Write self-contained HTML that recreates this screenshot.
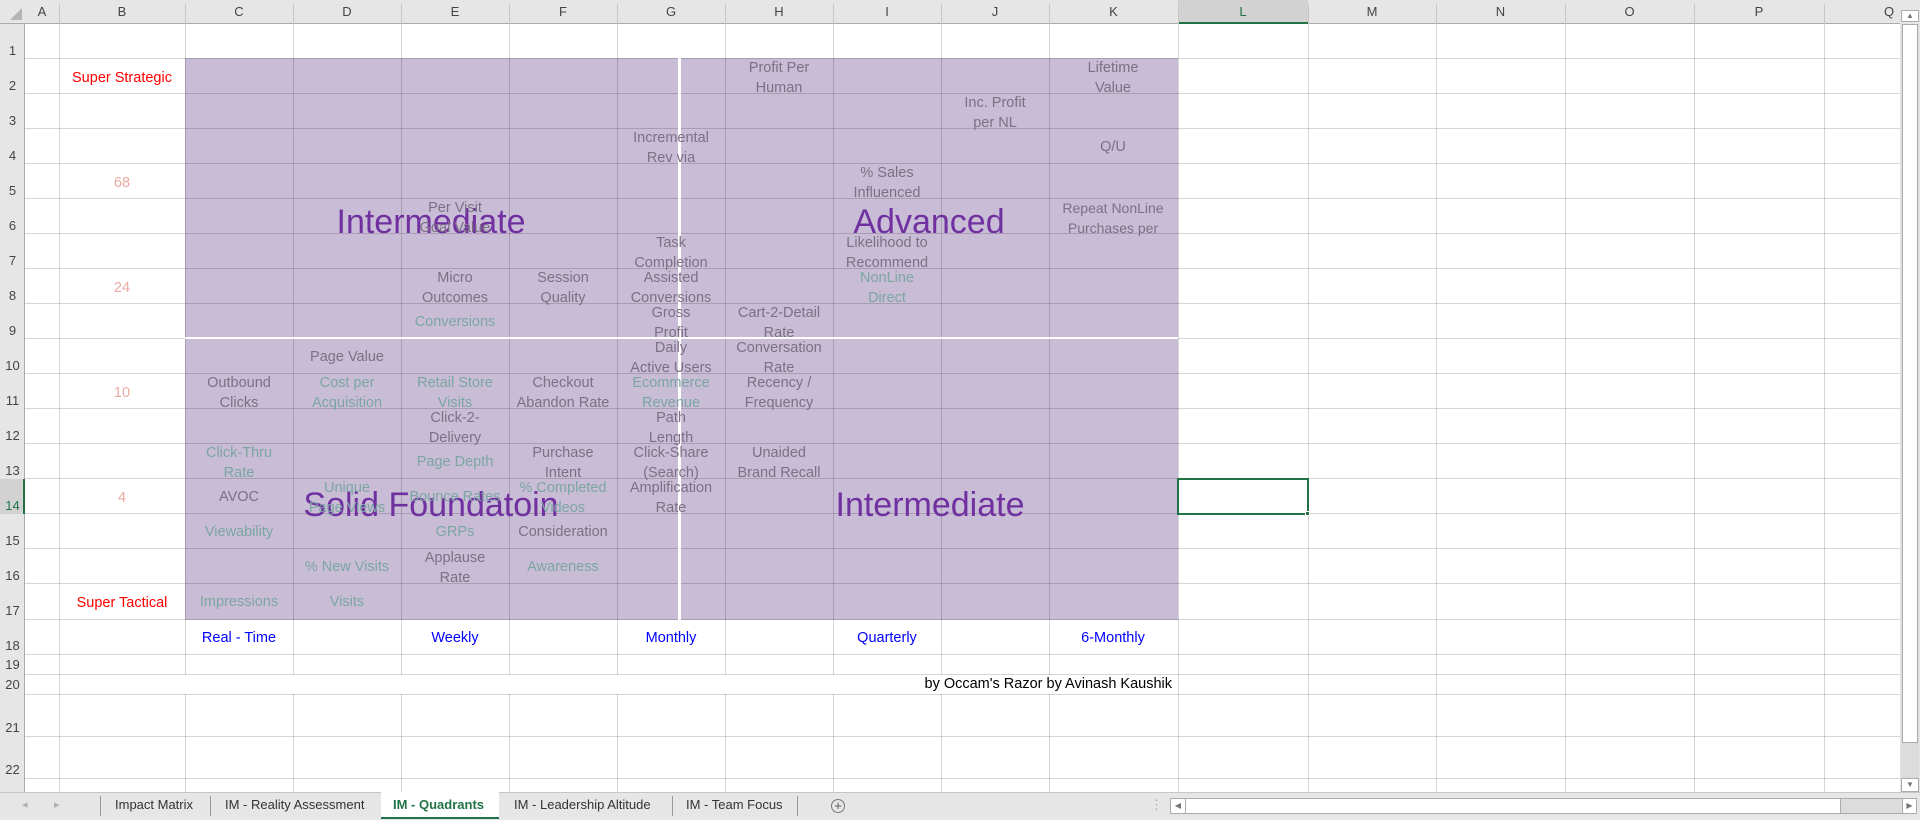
<!DOCTYPE html>
<html><head><meta charset="utf-8"><style>
*{margin:0;padding:0;box-sizing:border-box}
body{width:1920px;height:820px;overflow:hidden;background:#fff;position:relative;font-family:"Liberation Sans",Arial,sans-serif}
.a{position:absolute}
.hl{position:absolute;left:25px;width:1875px;height:1px;background:rgba(0,0,0,0.16)}
.vl{position:absolute;top:24px;width:1px;height:768px;background:rgba(0,0,0,0.16)}
.ch{position:absolute;top:0;height:24px;line-height:24px;text-align:center;font-size:13px;color:#444}
.rh{position:absolute;left:0;width:25px;text-align:center;font-size:13px;color:#444}
.t{position:absolute;width:220px;text-align:center;font-size:14.5px;line-height:18px;height:18px;white-space:nowrap;color:#7b7186}
.g{color:#7ba6a2}
.r{color:#ff0000}
.p{color:#e9aaa2}
.b{color:#0000ff}
.big{position:absolute;font-size:34px;color:#7030a0;white-space:nowrap;line-height:40px;width:400px;text-align:center}
.tab{position:absolute;top:792px;height:28px;line-height:26px;font-size:13px;color:#333;white-space:nowrap}
</style></head><body>
<div class="a" style="left:0;top:0;width:1920px;height:24px;background:#e6e6e6;border-bottom:1px solid #ababab"></div>
<div class="a" style="left:0;top:24px;width:25px;height:768px;background:#e6e6e6;border-right:1px solid #ababab"></div>
<div class="a" style="left:1178px;top:0;width:130px;height:24px;background:#d2d2d2;border-bottom:2px solid #217346"></div>
<div class="a" style="left:0;top:479px;width:25px;height:35px;background:#d2d2d2;border-right:2px solid #217346"></div>
<div class="a" style="left:10px;top:8px;width:0;height:0;border-left:12px solid transparent;border-bottom:12px solid #b5b5b5"></div>
<div class="ch" style="left:25px;width:34px">A</div>
<div class="ch" style="left:59px;width:126px">B</div>
<div class="ch" style="left:185px;width:108px">C</div>
<div class="ch" style="left:293px;width:108px">D</div>
<div class="ch" style="left:401px;width:108px">E</div>
<div class="ch" style="left:509px;width:108px">F</div>
<div class="ch" style="left:617px;width:108px">G</div>
<div class="ch" style="left:725px;width:108px">H</div>
<div class="ch" style="left:833px;width:108px">I</div>
<div class="ch" style="left:941px;width:108px">J</div>
<div class="ch" style="left:1049px;width:129px">K</div>
<div class="ch" style="left:1178px;width:130px;color:#217346">L</div>
<div class="ch" style="left:1308px;width:128px">M</div>
<div class="ch" style="left:1436px;width:129px">N</div>
<div class="ch" style="left:1565px;width:129px">O</div>
<div class="ch" style="left:1694px;width:130px">P</div>
<div class="ch" style="left:1824px;width:130px">Q</div>
<div class="a" style="left:59px;top:4px;width:1px;height:20px;background:#c6c6c6"></div>
<div class="a" style="left:185px;top:4px;width:1px;height:20px;background:#c6c6c6"></div>
<div class="a" style="left:293px;top:4px;width:1px;height:20px;background:#c6c6c6"></div>
<div class="a" style="left:401px;top:4px;width:1px;height:20px;background:#c6c6c6"></div>
<div class="a" style="left:509px;top:4px;width:1px;height:20px;background:#c6c6c6"></div>
<div class="a" style="left:617px;top:4px;width:1px;height:20px;background:#c6c6c6"></div>
<div class="a" style="left:725px;top:4px;width:1px;height:20px;background:#c6c6c6"></div>
<div class="a" style="left:833px;top:4px;width:1px;height:20px;background:#c6c6c6"></div>
<div class="a" style="left:941px;top:4px;width:1px;height:20px;background:#c6c6c6"></div>
<div class="a" style="left:1049px;top:4px;width:1px;height:20px;background:#c6c6c6"></div>
<div class="a" style="left:1178px;top:4px;width:1px;height:20px;background:#c6c6c6"></div>
<div class="a" style="left:1308px;top:4px;width:1px;height:20px;background:#c6c6c6"></div>
<div class="a" style="left:1436px;top:4px;width:1px;height:20px;background:#c6c6c6"></div>
<div class="a" style="left:1565px;top:4px;width:1px;height:20px;background:#c6c6c6"></div>
<div class="a" style="left:1694px;top:4px;width:1px;height:20px;background:#c6c6c6"></div>
<div class="a" style="left:1824px;top:4px;width:1px;height:20px;background:#c6c6c6"></div>
<div class="rh" style="top:43px">1</div>
<div class="rh" style="top:78px">2</div>
<div class="rh" style="top:113px">3</div>
<div class="rh" style="top:148px">4</div>
<div class="rh" style="top:183px">5</div>
<div class="rh" style="top:218px">6</div>
<div class="rh" style="top:253px">7</div>
<div class="rh" style="top:288px">8</div>
<div class="rh" style="top:323px">9</div>
<div class="rh" style="top:358px">10</div>
<div class="rh" style="top:393px">11</div>
<div class="rh" style="top:428px">12</div>
<div class="rh" style="top:463px">13</div>
<div class="rh" style="top:498px;color:#217346">14</div>
<div class="rh" style="top:533px">15</div>
<div class="rh" style="top:568px">16</div>
<div class="rh" style="top:603px">17</div>
<div class="rh" style="top:638px">18</div>
<div class="rh" style="top:657px">19</div>
<div class="rh" style="top:677px">20</div>
<div class="rh" style="top:720px">21</div>
<div class="rh" style="top:762px">22</div>
<div class="a" style="left:185px;top:58px;width:993px;height:562px;background:#c9bcd6"></div>
<div class="hl" style="top:58px"></div><div class="hl" style="top:93px"></div><div class="hl" style="top:128px"></div>
<div class="hl" style="top:163px"></div><div class="hl" style="top:198px"></div><div class="hl" style="top:233px"></div>
<div class="hl" style="top:268px"></div><div class="hl" style="top:303px"></div><div class="hl" style="top:338px"></div>
<div class="hl" style="top:373px"></div><div class="hl" style="top:408px"></div><div class="hl" style="top:443px"></div>
<div class="hl" style="top:478px"></div><div class="hl" style="top:513px"></div><div class="hl" style="top:548px"></div>
<div class="hl" style="top:583px"></div><div class="hl" style="top:619px"></div><div class="hl" style="top:654px"></div>
<div class="hl" style="top:674px"></div><div class="hl" style="top:694px"></div><div class="hl" style="top:736px"></div>
<div class="hl" style="top:778px"></div>
<div class="vl" style="left:59px"></div><div class="vl" style="left:185px"></div><div class="vl" style="left:293px"></div>
<div class="vl" style="left:401px"></div><div class="vl" style="left:509px"></div><div class="vl" style="left:617px"></div>
<div class="vl" style="left:725px"></div><div class="vl" style="left:833px"></div><div class="vl" style="left:941px"></div>
<div class="vl" style="left:1049px"></div><div class="vl" style="left:1178px"></div><div class="vl" style="left:1308px"></div>
<div class="vl" style="left:1436px"></div><div class="vl" style="left:1565px"></div><div class="vl" style="left:1694px"></div>
<div class="vl" style="left:1824px"></div>
<div class="a" style="left:60px;top:675px;width:1118px;height:19px;background:#fff"></div>
<div class="a" style="left:678px;top:58px;width:3px;height:562px;background:#fff"></div>
<div class="a" style="left:185px;top:337px;width:993px;height:2px;background:#fff"></div>
<div class="a" style="left:1177px;top:478px;width:132px;height:37px;border:2px solid #217346"></div>
<div class="a" style="left:1305px;top:511px;width:5px;height:5px;background:#217346;border:1px solid #fff"></div>

<div class="big" style="left:231px;top:202px">Intermediate</div>
<div class="big" style="left:729px;top:202px">Advanced</div>
<div class="big" style="left:231px;top:485px">Solid Foundatoin</div>
<div class="big" style="left:730px;top:485px">Intermediate</div>

<div class="t r" style="left:12px;top:69px">Super Strategic</div>
<div class="t p" style="left:12px;top:174px">68</div>
<div class="t p" style="left:12px;top:279px">24</div>
<div class="t p" style="left:12px;top:384px">10</div>
<div class="t p" style="left:12px;top:489px">4</div>
<div class="t r" style="left:12px;top:594px">Super Tactical</div>

<div class="t" style="left:129px;top:374px">Outbound</div><div class="t" style="left:129px;top:394px">Clicks</div>
<div class="t g" style="left:129px;top:444px">Click-Thru</div><div class="t g" style="left:129px;top:464px">Rate</div>
<div class="t" style="left:129px;top:488px">AVOC</div>
<div class="t g" style="left:129px;top:523px">Viewability</div>
<div class="t g" style="left:129px;top:593px">Impressions</div>
<div class="t" style="left:237px;top:348px">Page Value</div>
<div class="t g" style="left:237px;top:374px">Cost per</div><div class="t g" style="left:237px;top:394px">Acquisition</div>
<div class="t g" style="left:237px;top:479px">Unique</div><div class="t g" style="left:237px;top:499px">Page Views</div>
<div class="t g" style="left:237px;top:558px">% New Visits</div>
<div class="t g" style="left:237px;top:593px">Visits</div>
<div class="t" style="left:345px;top:199px">Per Visit</div><div class="t" style="left:345px;top:219px">Goal Value</div>
<div class="t" style="left:345px;top:269px">Micro</div><div class="t" style="left:345px;top:289px">Outcomes</div>
<div class="t g" style="left:345px;top:313px">Conversions</div>
<div class="t g" style="left:345px;top:374px">Retail Store</div><div class="t g" style="left:345px;top:394px">Visits</div>
<div class="t" style="left:345px;top:409px">Click-2-</div><div class="t" style="left:345px;top:429px">Delivery</div>
<div class="t g" style="left:345px;top:453px">Page Depth</div>
<div class="t g" style="left:345px;top:488px">Bounce Rates</div>
<div class="t g" style="left:345px;top:523px">GRPs</div>
<div class="t" style="left:345px;top:549px">Applause</div><div class="t" style="left:345px;top:569px">Rate</div>
<div class="t" style="left:453px;top:269px">Session</div><div class="t" style="left:453px;top:289px">Quality</div>
<div class="t" style="left:453px;top:374px">Checkout</div><div class="t" style="left:453px;top:394px">Abandon Rate</div>
<div class="t" style="left:453px;top:444px">Purchase</div><div class="t" style="left:453px;top:464px">Intent</div>
<div class="t g" style="left:453px;top:479px">% Completed</div><div class="t g" style="left:453px;top:499px">Videos</div>
<div class="t" style="left:453px;top:523px">Consideration</div>
<div class="t g" style="left:453px;top:558px">Awareness</div>
<div class="t" style="left:561px;top:129px">Incremental</div><div class="t" style="left:561px;top:149px">Rev via</div>
<div class="t" style="left:561px;top:234px">Task</div><div class="t" style="left:561px;top:254px">Completion</div>
<div class="t" style="left:561px;top:269px">Assisted</div><div class="t" style="left:561px;top:289px">Conversions</div>
<div class="t" style="left:561px;top:304px">Gross</div><div class="t" style="left:561px;top:324px">Profit</div>
<div class="t" style="left:561px;top:339px">Daily</div><div class="t" style="left:561px;top:359px">Active Users</div>
<div class="t g" style="left:561px;top:374px">Ecommerce</div><div class="t g" style="left:561px;top:394px">Revenue</div>
<div class="t" style="left:561px;top:409px">Path</div><div class="t" style="left:561px;top:429px">Length</div>
<div class="t" style="left:561px;top:444px">Click-Share</div><div class="t" style="left:561px;top:464px">(Search)</div>
<div class="t" style="left:561px;top:479px">Amplification</div><div class="t" style="left:561px;top:499px">Rate</div>
<div class="t" style="left:669px;top:59px">Profit Per</div><div class="t" style="left:669px;top:79px">Human</div>
<div class="t" style="left:669px;top:304px">Cart-2-Detail</div><div class="t" style="left:669px;top:324px">Rate</div>
<div class="t" style="left:669px;top:339px">Conversation</div><div class="t" style="left:669px;top:359px">Rate</div>
<div class="t" style="left:669px;top:374px">Recency /</div><div class="t" style="left:669px;top:394px">Frequency</div>
<div class="t" style="left:669px;top:444px">Unaided</div><div class="t" style="left:669px;top:464px">Brand Recall</div>
<div class="t" style="left:777px;top:164px">% Sales</div><div class="t" style="left:777px;top:184px">Influenced</div>
<div class="t" style="left:777px;top:234px">Likelihood to</div><div class="t" style="left:777px;top:254px">Recommend</div>
<div class="t g" style="left:777px;top:269px">NonLine</div><div class="t g" style="left:777px;top:289px">Direct</div>
<div class="t" style="left:885px;top:94px">Inc. Profit</div><div class="t" style="left:885px;top:114px">per NL</div>
<div class="t" style="left:1003px;top:59px">Lifetime</div><div class="t" style="left:1003px;top:79px">Value</div>
<div class="t" style="left:1003px;top:138px">Q/U</div>
<div class="t" style="left:1003px;top:199px;font-size:14px">Repeat NonLine</div><div class="t" style="left:1003px;top:219px;font-size:14px">Purchases per</div>

<div class="t b" style="left:129px;top:629px">Real - Time</div>
<div class="t b" style="left:345px;top:629px">Weekly</div>
<div class="t b" style="left:561px;top:629px">Monthly</div>
<div class="t b" style="left:777px;top:629px">Quarterly</div>
<div class="t b" style="left:1003px;top:629px">6-Monthly</div>
<div class="a" style="left:700px;top:675px;width:472px;text-align:right;font-size:14.5px;line-height:18px;color:#000">by Occam's Razor by Avinash Kaushik</div>

<div class="a" style="left:1900px;top:0;width:20px;height:792px;background:#e6e6e6"></div>
<div class="a" style="left:1901px;top:24px;width:18px;height:768px;background:#dcdcdc"></div>
<div class="a" style="left:1901px;top:10px;width:18px;height:12px;background:#fff;border:1px solid #ababab;font-size:8px;text-align:center;color:#777;line-height:10px">▲</div>
<div class="a" style="left:1902px;top:24px;width:16px;height:719px;background:#fff;border:1px solid #ababab"></div>
<div class="a" style="left:1901px;top:778px;width:18px;height:14px;background:#fff;border:1px solid #ababab;font-size:8px;text-align:center;color:#777;line-height:12px">▼</div>

<div class="a" style="left:0;top:792px;width:1920px;height:28px;background:#e6e6e6;border-top:1px solid #c6c6c6"></div>
<div class="tab" style="left:22px;color:#b0b0b0;font-size:11px">◂</div>
<div class="tab" style="left:54px;color:#b0b0b0;font-size:11px">▸</div>
<div class="a" style="left:100px;top:796px;width:1px;height:20px;background:#999"></div>
<div class="tab" style="left:115px">Impact Matrix</div>
<div class="a" style="left:210px;top:796px;width:1px;height:20px;background:#999"></div>
<div class="tab" style="left:225px">IM - Reality Assessment</div>
<div class="a" style="left:381px;top:792px;width:118px;height:27px;background:#fff;border-bottom:2px solid #217346"></div>
<div class="tab" style="left:393px;color:#217346;font-weight:bold">IM - Quadrants</div>
<div class="tab" style="left:514px">IM - Leadership Altitude</div>
<div class="a" style="left:672px;top:796px;width:1px;height:20px;background:#999"></div>
<div class="tab" style="left:686px">IM - Team Focus</div>
<div class="a" style="left:797px;top:796px;width:1px;height:20px;background:#999"></div>
<div class="a" style="left:831px;top:799px;width:14px;height:14px;border:1px solid #777;border-radius:50%;text-align:center;line-height:11px;font-size:13px;color:#555">+</div>
<div class="tab" style="left:1150px;color:#aaa">⋮</div>
<div class="a" style="left:1170px;top:798px;width:747px;height:16px;background:#dcdcdc;border:1px solid #ababab"></div>
<div class="a" style="left:1171px;top:799px;width:14px;height:14px;background:#fff;font-size:8px;color:#777;line-height:14px;text-align:center">◀</div>
<div class="a" style="left:1185px;top:799px;width:656px;height:14px;background:#fff;border-left:1px solid #ababab;border-right:1px solid #ababab"></div>
<div class="a" style="left:1902px;top:799px;width:14px;height:14px;background:#fff;border-left:1px solid #ababab;font-size:8px;color:#777;line-height:14px;text-align:center">▶</div>
</body></html>
